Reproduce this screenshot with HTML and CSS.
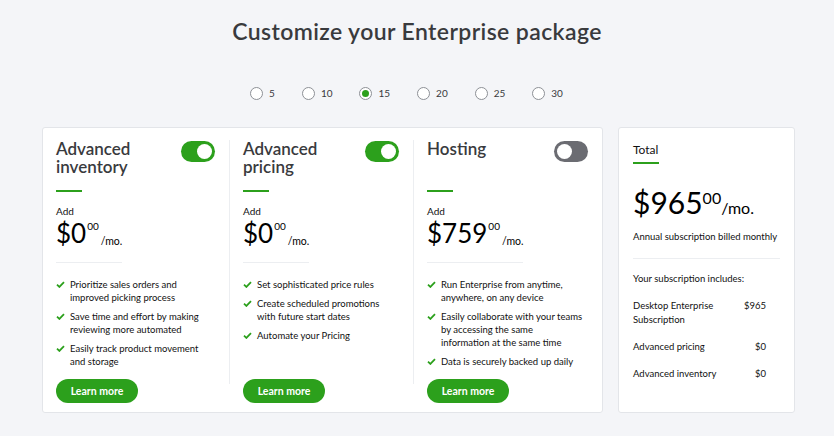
FILE: index.html
```html
<!DOCTYPE html>
<html lang="en">
<head>
<meta charset="utf-8">
<title>Customize your Enterprise package</title>
<link rel="stylesheet" href="styles.css">
</head>
<body>
<h1 class="page-title">Customize your Enterprise package</h1>

<div class="users">
  <label class="user-opt"><span class="radio"></span><span class="radio-label">5</span></label>
  <label class="user-opt"><span class="radio"></span><span class="radio-label">10</span></label>
  <label class="user-opt"><span class="radio radio-on"></span><span class="radio-label">15</span></label>
  <label class="user-opt"><span class="radio"></span><span class="radio-label">20</span></label>
  <label class="user-opt"><span class="radio"></span><span class="radio-label">25</span></label>
  <label class="user-opt"><span class="radio"></span><span class="radio-label">30</span></label>
</div>

<div class="cards">
  <div class="card addons">
    <div class="addon addon-first">
      <div class="addon-head">
        <h2 class="addon-name">Advanced inventory</h2>
        <span class="toggle toggle-on"><span class="knob"></span></span>
      </div>
      <div class="rule"></div>
      <div class="add">Add</div>
      <div class="price"><span class="amount">$0</span><span class="cents">00</span><span class="per">/mo.</span></div>
      <ul class="features">
        <li><svg class="check" viewBox="0 0 10 8"><path d="M1 4.2 3.7 6.8 9 1.2"/></svg><span>Prioritize sales orders and improved picking process</span></li>
        <li><svg class="check" viewBox="0 0 10 8"><path d="M1 4.2 3.7 6.8 9 1.2"/></svg><span>Save time and effort by making reviewing more automated</span></li>
        <li><svg class="check" viewBox="0 0 10 8"><path d="M1 4.2 3.7 6.8 9 1.2"/></svg><span>Easily track product movement and storage</span></li>
      </ul>
    </div>
    <div class="addon addon-mid">
      <div class="addon-head">
        <h2 class="addon-name">Advanced pricing</h2>
        <span class="toggle toggle-on"><span class="knob"></span></span>
      </div>
      <div class="rule"></div>
      <div class="add">Add</div>
      <div class="price"><span class="amount">$0</span><span class="cents">00</span><span class="per">/mo.</span></div>
      <ul class="features">
        <li><svg class="check" viewBox="0 0 10 8"><path d="M1 4.2 3.7 6.8 9 1.2"/></svg><span>Set sophisticated price rules</span></li>
        <li><svg class="check" viewBox="0 0 10 8"><path d="M1 4.2 3.7 6.8 9 1.2"/></svg><span>Create scheduled promotions with future start dates</span></li>
        <li><svg class="check" viewBox="0 0 10 8"><path d="M1 4.2 3.7 6.8 9 1.2"/></svg><span>Automate your Pricing</span></li>
      </ul>
    </div>
    <div class="addon addon-last">
      <div class="addon-head">
        <h2 class="addon-name">Hosting</h2>
        <span class="toggle"><span class="knob"></span></span>
      </div>
      <div class="rule"></div>
      <div class="add">Add</div>
      <div class="price"><span class="amount">$759</span><span class="cents">00</span><span class="per">/mo.</span></div>
      <ul class="features features-narrow">
        <li><svg class="check" viewBox="0 0 10 8"><path d="M1 4.2 3.7 6.8 9 1.2"/></svg><span>Run Enterprise from anytime, anywhere, on any device</span></li>
        <li><svg class="check" viewBox="0 0 10 8"><path d="M1 4.2 3.7 6.8 9 1.2"/></svg><span>Easily collaborate with your teams by accessing the same information at the same time</span></li>
        <li><svg class="check" viewBox="0 0 10 8"><path d="M1 4.2 3.7 6.8 9 1.2"/></svg><span>Data is securely backed up daily</span></li>
      </ul>
    </div>
    <div class="btn-cell"><button class="learn">Learn more</button></div>
    <div class="btn-cell"><button class="learn">Learn more</button></div>
    <div class="btn-cell"><button class="learn">Learn more</button></div>
  </div>

  <div class="card total">
    <div class="total-title">Total</div>
    <div class="rule"></div>
    <div class="total-price"><span class="amount">$965</span><span class="cents">00</span><span class="per">/mo.</span></div>
    <div class="billed">Annual subscription billed monthly</div>
    <div class="includes">Your subscription includes:</div>
    <div class="line"><span class="line-name">Desktop Enterprise Subscription</span><span class="line-price">$965</span></div>
    <div class="line"><span class="line-name">Advanced pricing</span><span class="line-price">$0</span></div>
    <div class="line"><span class="line-name">Advanced inventory</span><span class="line-price">$0</span></div>
  </div>
</div>
</body>
</html>
```

FILE: styles.css
```css
* { box-sizing: border-box; }

body {
  margin: 0;
  background: #f4f5f8;
  font-family: Lato, "Open Sans", sans-serif;
  color: #393a3d;
}

.page-title {
  margin: 0;
  padding-top: 16px;
  font-size: 23px;
  letter-spacing: 0.4px;
  line-height: 30px;
  font-weight: 600;
  text-align: center;
  color: #393a3d;
}

.users {
  display: flex;
  justify-content: center;
  margin-top: 40px;
  padding-left: 6px;
  height: 14px;
}

.user-opt {
  display: flex;
  align-items: center;
  gap: 6px;
  margin-right: 27px;
  font-size: 10px;
  line-height: 14px;
  color: #393a3d;
}

.radio {
  width: 13px;
  height: 13px;
  border: 1px solid #8d9096;
  border-radius: 50%;
  background: #fff;
  display: flex;
  align-items: center;
  justify-content: center;
}

.radio-on::after {
  content: "";
  width: 7px;
  height: 7px;
  border-radius: 50%;
  background: #2ca01c;
}

.cards {
  display: flex;
  gap: 15px;
  margin: 27px 0 0 42px;
}

.card {
  background: #fff;
  border: 1px solid #e3e5e9;
  border-radius: 3px;
}

.addons {
  width: 561px;
  height: 286px;
  padding-top: 12px;
  display: grid;
  grid-template-columns: 187px 184px 188px;
  grid-template-rows: auto auto;
  align-content: start;
}

.addon {
  padding: 0 14px 16px 13px;
}

.addon-first { border-right: 1px solid #eceef1; }
.addon-mid { border-right: 1px solid #eceef1; }

.addon-head {
  display: flex;
  justify-content: space-between;
  align-items: flex-start;
  height: 37px;
}

.addon-name {
  margin: 0;
  font-size: 17px;
  line-height: 18px;
  font-weight: 600;
  width: 110px;
  color: #393a3d;
}

.toggle {
  width: 34px;
  height: 21px;
  margin-top: 1px;
  border-radius: 11px;
  background: #6b6c72;
  display: flex;
  align-items: center;
  padding: 0 3px;
}

.toggle-on {
  background: #2ca01c;
  justify-content: flex-end;
}

.knob {
  width: 15px;
  height: 15px;
  border-radius: 50%;
  background: #fff;
}

.rule {
  width: 26px;
  height: 2px;
  background: #2ca01c;
  margin-top: 13px;
}

.add {
  margin-top: 13px;
  font-size: 10px;
  line-height: 13px;
  color: #111;
}

.price {
  width: fit-content;
  font-size: 26px;
  line-height: 30px;
  padding-bottom: 14px;
  border-bottom: 1px solid #eceef1;
  color: #000;
  white-space: nowrap;
}

.price .cents { font-size: 10px; line-height: 0; vertical-align: 13px; margin-left: 1px; }
.price .per { font-size: 10.5px; line-height: 0; vertical-align: -2px; margin-left: 2px; }

.features {
  list-style: none;
  margin: 15px 0 0;
  padding: 0;
  display: flex;
  flex-direction: column;
  gap: 6px;
}

.features li {
  display: flex;
  align-items: flex-start;
  gap: 5px;
  font-size: 9.5px;
  line-height: 13px;
  color: #111;
}

.features-narrow li span { max-width: 142px; }

.check {
  flex: none;
  width: 9px;
  height: 7px;
  margin-top: 3px;
  fill: none;
  stroke: #2ca01c;
  stroke-width: 2;
}

.btn-cell {
  margin-top: -5px;
  padding-left: 13px;
}

.learn {
  width: 82px;
  height: 24px;
  border: 0;
  border-radius: 12px;
  background: #2ca01c;
  color: #fff;
  font-family: Lato, "Open Sans", sans-serif;
  font-size: 10.5px;
  font-weight: 700;
  padding: 0;
}

.total {
  width: 177px;
  padding: 14px 14px 0;
}

.total-title {
  font-size: 12px;
  line-height: 16px;
  color: #111;
}

.total .rule { margin-top: 4px; }

.total-price {
  margin-top: 21px;
  font-size: 30px;
  line-height: 34px;
  color: #000;
  white-space: nowrap;
}

.total-price .cents { font-size: 16px; line-height: 0; vertical-align: 10px; }
.total-price .per { font-size: 16px; line-height: 0; }

.billed {
  margin-top: 11px;
  padding-bottom: 15px;
  border-bottom: 1px solid #eceef1;
  font-size: 9.5px;
  line-height: 13px;
  color: #111;
}

.includes {
  margin-top: 13px;
  font-size: 9.5px;
  line-height: 14px;
  color: #111;
}

.line {
  margin-top: 13px;
  display: flex;
  justify-content: space-between;
  padding-right: 14px;
  font-size: 9.5px;
  line-height: 14px;
  color: #111;
}

.line-name { width: 100px; }
```
